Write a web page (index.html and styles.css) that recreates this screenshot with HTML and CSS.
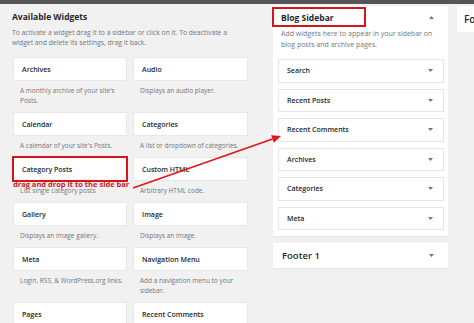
FILE: index.html
```html
<!DOCTYPE html>
<html lang="en">
<head>
    <meta charset="UTF-8">
    <meta name="viewport" content="width=device-width, initial-scale=1.0">
    <title>Widgets</title>
    <link rel="stylesheet" href="styles.css">
</head>
<body>
    <div class="topbar"></div>

    <div class="layout">
        <!-- available widgets -->
        <div class="available">
            <h2 class="available-title">Available Widgets</h2>
            <p class="available-desc">To activate a widget drag it to a sidebar or click on it. To deactivate a widget and delete its settings, drag it back.</p>

            <div class="widget-grid">
                <div class="widget">
                    <div class="widget-card">Archives</div>
                    <p class="widget-desc">A monthly archive of your site's Posts.</p>
                </div>
                <div class="widget">
                    <div class="widget-card">Audio</div>
                    <p class="widget-desc">Displays an audio player.</p>
                </div>
                <div class="widget">
                    <div class="widget-card">Calendar</div>
                    <p class="widget-desc">A calendar of your site's Posts.</p>
                </div>
                <div class="widget">
                    <div class="widget-card">Categories</div>
                    <p class="widget-desc">A list or dropdown of categories.</p>
                </div>
                <div class="widget">
                    <div class="widget-card marked">Category Posts
                        <span class="drag-note">drag and drop it to the side bar</span>
                    </div>
                    <p class="widget-desc">List single category posts</p>
                </div>
                <div class="widget">
                    <div class="widget-card">Custom HTML</div>
                    <p class="widget-desc">Arbitrary HTML code.</p>
                </div>
                <div class="widget">
                    <div class="widget-card">Gallery</div>
                    <p class="widget-desc">Displays an image gallery.</p>
                </div>
                <div class="widget">
                    <div class="widget-card">Image</div>
                    <p class="widget-desc">Displays an image.</p>
                </div>
                <div class="widget">
                    <div class="widget-card">Meta</div>
                    <p class="widget-desc">Login, RSS, &amp; WordPress.org links.</p>
                </div>
                <div class="widget">
                    <div class="widget-card">Navigation Menu</div>
                    <p class="widget-desc">Add a navigation menu to your sidebar.</p>
                </div>
                <div class="widget">
                    <div class="widget-card">Pages</div>
                </div>
                <div class="widget">
                    <div class="widget-card">Recent Comments</div>
                </div>
            </div>
        </div>

        <!-- sidebars -->
        <div class="sidebars">
            <div class="panel">
                <div class="panel-head">
                    <span class="panel-title marked-title">Blog Sidebar</span>
                    <svg class="caret" width="5" height="3" viewBox="0 0 5 3"><polygon points="0,3 5,3 2.5,0" fill="#72777c"/></svg>
                </div>
                <p class="panel-desc">Add widgets here to appear in your sidebar on blog posts and archive pages.</p>
                <div class="side-item"><span>Search</span><svg class="caret" width="5" height="3" viewBox="0 0 5 3"><polygon points="0,0 5,0 2.5,3" fill="#72777c"/></svg></div>
                <div class="side-item"><span>Recent Posts</span><svg class="caret" width="5" height="3" viewBox="0 0 5 3"><polygon points="0,0 5,0 2.5,3" fill="#72777c"/></svg></div>
                <div class="side-item"><span>Recent Comments</span><svg class="caret" width="5" height="3" viewBox="0 0 5 3"><polygon points="0,0 5,0 2.5,3" fill="#72777c"/></svg></div>
                <div class="side-item"><span>Archives</span><svg class="caret" width="5" height="3" viewBox="0 0 5 3"><polygon points="0,0 5,0 2.5,3" fill="#72777c"/></svg></div>
                <div class="side-item"><span>Categories</span><svg class="caret" width="5" height="3" viewBox="0 0 5 3"><polygon points="0,0 5,0 2.5,3" fill="#72777c"/></svg></div>
                <div class="side-item"><span>Meta</span><svg class="caret" width="5" height="3" viewBox="0 0 5 3"><polygon points="0,0 5,0 2.5,3" fill="#72777c"/></svg></div>
            </div>

            <div class="panel footer-panel">
                <span class="footer-title">Footer 1</span>
                <svg class="caret" width="5" height="3" viewBox="0 0 5 3"><polygon points="0,0 5,0 2.5,3" fill="#72777c"/></svg>
            </div>
        </div>

        <div class="next-panel">Fo</div>
    </div>

    <!-- annotation arrow -->
    <svg class="arrow" width="474" height="323" viewBox="0 0 474 323">
        <line x1="133" y1="188" x2="272.5" y2="139" stroke="#e0181b" stroke-width="1.8"/>
        <polygon points="281,136 273.8,142.8 271.2,135.2" fill="#e0181b"/>
    </svg>
</body>
</html>
```

FILE: styles.css
```css
*{
    margin: 0;
    padding: 0;
    box-sizing: border-box;
}
body{
    width: 474px;
    height: 323px;
    overflow: hidden;
    background: #f1f1f1;
    font-family: "Open Sans", "Liberation Sans", sans-serif;
    color: #23282d;
    position: relative;
}
.topbar{
    height: 4px;
    background: #555;
}
.layout{
    display: flex;
    align-items: flex-start;
    padding-top: 2px;
}

/* available widgets */
.available{
    width: 255px;
    flex-shrink: 0;
    padding: 5px 0 0 13px;
}
.available-title{
    margin-left: -1px;
    font-size: 8.5px;
    font-weight: 700;
    line-height: 12px;
}
.available-desc{
    width: 232px;
    margin: 5px 0 0 -1px;
    font-size: 6.8px;
    line-height: 10px;
    color: #72777c;
}
.widget-grid{
    margin-top: 9px;
    display: grid;
    grid-template-columns: 114px 115px;
    column-gap: 6px;
}
.widget-card{
    position: relative;
    height: 24px;
    display: flex;
    align-items: center;
    padding-left: 8px;
    background: #fff;
    border: 1px solid #e8e8e8;
    font-size: 7px;
    font-weight: 600;
}
.widget-card.marked{
    outline: 2px solid #d7141a;
    outline-offset: -1px;
}
.drag-note{
    position: absolute;
    left: -1px;
    top: 22px;
    white-space: nowrap;
    font-size: 7.5px;
    font-weight: 700;
    line-height: 9px;
    color: #d7141a;
    z-index: 2;
}
.widget-desc{
    padding: 5px 3px 6px 7px;
    font-size: 6.5px;
    line-height: 10px;
    color: #72777c;
}

/* sidebars */
.sidebars{
    width: 175px;
    flex-shrink: 0;
    margin-left: 18px;
}
.panel{
    background: #fff;
    box-shadow: 0 1px 1px rgba(0,0,0,.04);
    padding-bottom: 0.5px;
}
.panel-head{
    display: flex;
    justify-content: space-between;
    align-items: center;
    padding-top: 1px;
    padding-right: 14px;
}
.panel-title{
    font-size: 8.5px;
    font-weight: 700;
}
.marked-title{
    display: flex;
    align-items: center;
    width: 94px;
    height: 20px;
    margin-left: -1px;
    padding-left: 7px;
    border: 2px solid #d7141a;
}
.panel-desc{
    margin-top: 2px;
    padding: 0 12px 0 8px;
    font-size: 7px;
    line-height: 10.5px;
    color: #72777c;
}
.side-item{
    height: 23.5px;
    margin: 9px 4px 0 5px;
    display: flex;
    justify-content: space-between;
    align-items: center;
    padding: 0 10px 0 8px;
    background: #fff;
    border: 1px solid #e5e5e5;
    font-size: 7px;
    font-weight: 600;
}
.side-item + .side-item{
    margin-top: 6px;
}
.side-item:last-child{
    margin-bottom: 5.5px;
}
.footer-panel{
    margin-top: 7px;
    height: 25px;
    display: flex;
    justify-content: space-between;
    align-items: center;
    padding: 0 14px 0 9px;
}
.footer-title{
    font-size: 9.5px;
    font-weight: 600;
}
.next-panel{
    margin-left: 9px;
    flex: 1;
    height: 26px;
    background: #fff;
    padding-left: 7px;
    font-size: 10px;
    font-weight: 600;
    line-height: 26px;
    white-space: nowrap;
    overflow: hidden;
}
.arrow{
    position: absolute;
    left: 0;
    top: 0;
    pointer-events: none;
}
```
